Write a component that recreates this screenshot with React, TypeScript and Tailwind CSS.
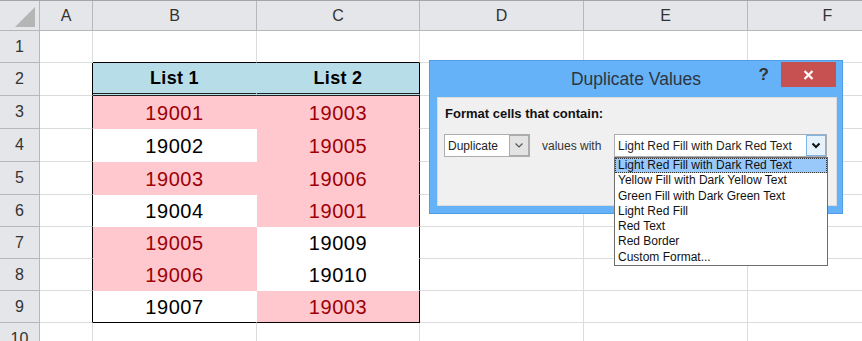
const COLS = [
  { key: "A", w: "w-[53px]" },
  { key: "B", w: "w-[164px]" },
  { key: "C", w: "w-[163px]" },
  { key: "D", w: "w-[164px]" },
  { key: "E", w: "w-[164px]" },
  { key: "F", w: "w-[160px]" },
];

const ROW_H = [
  "h-[32px]",
  "h-[33px]",
  "h-[33px]",
  "h-[33px]",
  "h-[33px]",
  "h-[32px]",
  "h-[32px]",
  "h-[32px]",
  "h-[32px]",
  "h-[33px]",
];

// [value, duplicate?] for B3:C9
const DATA: [string, boolean, string, boolean][] = [
  ["19001", true, "19003", true],
  ["19002", false, "19005", true],
  ["19003", true, "19006", true],
  ["19004", false, "19001", true],
  ["19005", true, "19009", false],
  ["19006", true, "19010", false],
  ["19007", false, "19003", true],
];

const OPTIONS = [
  "Light Red Fill with Dark Red Text",
  "Yellow Fill with Dark Yellow Text",
  "Green Fill with Dark Green Text",
  "Light Red Fill",
  "Red Text",
  "Red Border",
  "Custom Format...",
];

const grid = "border-r border-b border-[#dadcdd]";
const pink = "bg-[#ffc7ce] text-[#9c0006]";

function Chevron({ bold }: { bold?: boolean }) {
  return (
    <svg width="10" height="7" viewBox="0 0 10 7" fill="none">
      <polyline
        points="1.5,1.5 5,5 8.5,1.5"
        stroke={bold ? "#111" : "#555"}
        strokeWidth={bold ? 2 : 1.2}
      />
    </svg>
  );
}

function HeaderRow() {
  return (
    <div className="flex h-[31px] border-t border-[#a5a5a5]">
      <div className="relative w-[40px] shrink-0 bg-[#e4e6e9] border-r border-b border-[#b7b7b7]">
        <svg className="absolute right-[4px] bottom-[3px]" width="20" height="20" viewBox="0 0 20 20">
          <polygon points="20,0 20,20 0,20" fill="#b5b5b5" />
        </svg>
      </div>
      {COLS.map((c) => (
        <div
          key={c.key}
          className={`${c.w} shrink-0 flex items-center justify-center bg-[#e4e6e9] border-r border-b border-[#b7b7b7] text-[16px] text-[#333]`}
        >
          {c.key}
        </div>
      ))}
    </div>
  );
}

function cellClass(row: number, col: string) {
  // row is 1-based sheet row
  const inTable = row >= 2 && row <= 9;
  if (col === "A") return inTable ? "border-r border-r-black border-b border-b-[#dadcdd]" : grid;
  if (col === "B" || col === "C") {
    if (row === 1) return "border-r border-r-[#dadcdd] border-b border-b-black";
    if (row === 2) {
      const r = col === "C" ? "border-r border-r-black" : "border-r border-r-[#b7dee8]";
      return `bg-[#b7dee8] ${r} border-b-[3px] border-double border-b-[#222] font-bold text-[18px] tracking-[0.3px] text-black`;
    }
    if (inTable) {
      const d = DATA[row - 3];
      const dup = col === "B" ? d[1] : d[3];
      const fill = dup ? pink : "bg-white text-black";
      const fillBorder = dup ? "border-[#ffc7ce]" : "border-white";
      const r = col === "C" ? "border-r border-r-black" : `border-r ${fillBorder}`;
      const b = row === 9 ? "border-b border-b-black" : `border-b ${fillBorder}`;
      return `${fill} ${r} ${b} text-[20px] tracking-[0.6px] pt-[1px]`;
    }
  }
  return grid;
}

function cellText(row: number, col: string) {
  if (row === 2 && col === "B") return "List 1";
  if (row === 2 && col === "C") return "List 2";
  if (row >= 3 && row <= 9) {
    const d = DATA[row - 3];
    if (col === "B") return d[0];
    if (col === "C") return d[2];
  }
  return "";
}

function Dialog() {
  return (
    <div className="absolute left-[429px] top-[60px] w-[414px] h-[154px] flex flex-col bg-[#66b2f8] border border-[#4f9de6]">
      <div className="flex h-[36px]">
        <div className="w-[87px]" />
        <div className="flex-1 flex items-center justify-center text-[17.5px] text-[#2d3640] pt-[1px]">
          Duplicate Values
        </div>
        <div className="w-[87px] flex items-start justify-end">
          <span className="mt-[4px] mr-[12px] text-[17px] font-bold leading-[20px] text-[#333]">?</span>
          <div className="mt-[1px] mr-[6px] w-[55px] h-[25px] bg-[#c75050] flex items-center justify-center">
            <svg width="11" height="10" viewBox="0 0 11 10">
              <path d="M1.5 1 L9.5 9 M9.5 1 L1.5 9" stroke="#fff" strokeWidth="2.2" />
            </svg>
          </div>
        </div>
      </div>
      <div className="flex-1 ml-[7px] mr-[5px] mb-[7px] bg-[#f0f0f0] border border-[#dcdcdc] pl-[6px] pt-[8px]">
        <div className="ml-[1px] text-[13px] font-bold leading-[15px] text-[#111]">Format cells that contain:</div>
        <div className="flex items-center mt-[13px] text-[12px]">
          <div className="w-[86px] h-[23px] flex items-center bg-white border border-[#abadb3]">
            <span className="flex-1 pl-[3px] text-[#222]">Duplicate</span>
            <div className="w-[20px] h-[21px] flex items-center justify-center bg-[#e3e3e3] border border-[#acacac]">
              <Chevron />
            </div>
          </div>
          <span className="ml-[12px] w-[72px] text-[#333]">values with</span>
          <div className="ml-[0px] w-[213px] h-[23px] flex items-center bg-white border border-[#abadb3]">
            <span className="flex-1 pl-[3px] text-[#222]">Light Red Fill with Dark Red Text</span>
            <div className="w-[20px] h-[21px] flex items-center justify-center bg-[#e5f1fb] border border-[#7eb4ea]">
              <Chevron bold />
            </div>
          </div>
        </div>
      </div>
    </div>
  );
}

function DropList() {
  return (
    <div className="absolute left-[614px] top-[157px] w-[214px] h-[109px] bg-white border border-[#6e6e6e] text-[12px] text-[#111]">
      {OPTIONS.map((o, i) => (
        <div
          key={o}
          className={
            i === 0
              ? "h-[15.3px] leading-[13px] pl-[2px] bg-[#99c9fa] border border-dotted border-[#333]"
              : "h-[15.3px] leading-[15.3px] pl-[3px]"
          }
        >
          {o}
        </div>
      ))}
    </div>
  );
}

export default function App() {
  return (
    <div className="relative w-[862px] h-[341px] overflow-hidden bg-white font-['Liberation_Sans',Arial,sans-serif]">
      <HeaderRow />
      {ROW_H.map((h, i) => {
        const row = i + 1;
        return (
          <div key={row} className={`flex ${h}`}>
            <div className="w-[40px] shrink-0 flex items-center justify-center bg-[#e4e6e9] border-r border-b border-[#b7b7b7] text-[16px] text-[#333]">
              {row}
            </div>
            {COLS.map((c) => (
              <div
                key={c.key}
                className={`${c.w} shrink-0 flex items-center justify-center ${cellClass(row, c.key)}`}
              >
                {cellText(row, c.key)}
              </div>
            ))}
          </div>
        );
      })}
      <Dialog />
      <DropList />
    </div>
  );
}
